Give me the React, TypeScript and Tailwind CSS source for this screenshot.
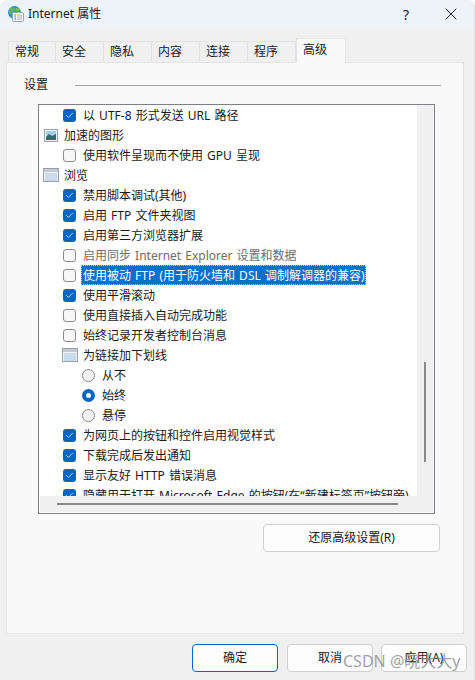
import { Check, X } from 'lucide-react'

const font = { fontFamily: '"Noto Sans", "Noto Sans CJK SC", sans-serif' }

type Row =
  | { kind: 'check'; label: string; checked?: boolean; muted?: boolean; selected?: boolean }
  | { kind: 'radio'; label: string; checked?: boolean }
  | { kind: 'group'; label: string; icon: 'image' | 'window'; nested?: boolean }

const rows: Row[] = [
  { kind: 'check', label: '以 UTF-8 形式发送 URL 路径', checked: true },
  { kind: 'group', label: '加速的图形', icon: 'image' },
  { kind: 'check', label: '使用软件呈现而不使用 GPU 呈现' },
  { kind: 'group', label: '浏览', icon: 'window' },
  { kind: 'check', label: '禁用脚本调试(其他)', checked: true },
  { kind: 'check', label: '启用 FTP 文件夹视图', checked: true },
  { kind: 'check', label: '启用第三方浏览器扩展', checked: true },
  { kind: 'check', label: '启用同步 Internet Explorer 设置和数据', muted: true },
  { kind: 'check', label: '使用被动 FTP (用于防火墙和 DSL 调制解调器的兼容)', selected: true },
  { kind: 'check', label: '使用平滑滚动', checked: true },
  { kind: 'check', label: '使用直接插入自动完成功能' },
  { kind: 'check', label: '始终记录开发者控制台消息' },
  { kind: 'group', label: '为链接加下划线', icon: 'window', nested: true },
  { kind: 'radio', label: '从不' },
  { kind: 'radio', label: '始终', checked: true },
  { kind: 'radio', label: '悬停' },
  { kind: 'check', label: '为网页上的按钮和控件启用视觉样式', checked: true },
  { kind: 'check', label: '下载完成后发出通知', checked: true },
  { kind: 'check', label: '显示友好 HTTP 错误消息', checked: true },
  { kind: 'check', label: '隐藏用于打开 Microsoft Edge 的按钮(在“新建标签页”按钮旁)', checked: true },
]

const tabs = ['常规', '安全', '隐私', '内容', '连接', '程序']

function GlobeIcon() {
  return (
    <svg width="18" height="18" viewBox="0 0 18 18" className="shrink-0">
      <circle cx="7.5" cy="7.5" r="6.5" fill="#2f8fd8" />
      <path d="M3 3.5c2-1.500 4-1 5 0s-.5 2.500-2 3-1 3-2.500 3S1.500 5 3 3.500z" fill="#5cb85c" />
      <path d="M9 3c2-.5 3.500.5 3.500 2S10 6.500 9 6 8 3.500 9 3z" fill="#6fbf5f" />
      <rect x="5.500" y="7.500" width="11" height="9" rx="1" fill="#f4f6f8" stroke="#9aa7b4" />
      <path d="M7.500 10H9M7.500 12H9M7.500 14H9" stroke="#3a78c2" strokeWidth="1" />
      <path d="M10 10h5M10 12h5M10 14h5" stroke="#a8b4c0" strokeWidth="1" />
    </svg>
  )
}

function GroupIcon({ icon }: { icon: 'image' | 'window' }) {
  if (icon === 'image') {
    return (
      <svg width="14" height="13" viewBox="0 0 14 13" className="shrink-0">
        <rect x="0.500" y="0.500" width="13" height="12" fill="#f2f4f6" stroke="#9aa0a8" />
        <rect x="2" y="2" width="10" height="9" fill="#9fd0ea" />
        <path d="M2 8l3-3 3 2 4-2v6H2z" fill="#2c6e6a" />
      </svg>
    )
  }
  return (
    <svg width="16" height="14" viewBox="0 0 16 14" className="shrink-0">
      <rect x="0.500" y="0.500" width="15" height="13" fill="#eef1f5" stroke="#9aa0a8" />
      <rect x="1" y="1" width="14" height="3" fill="#c3cad2" />
      <path d="M2 6h12M2 8h12M2 10h12M2 12h12" stroke="#a9c4e4" strokeWidth="1" />
    </svg>
  )
}

function CheckBox({ checked }: { checked?: boolean }) {
  if (checked) {
    return (
      <span className="flex h-[13px] w-[13px] shrink-0 items-center justify-center rounded-[3px] bg-[#0067c0]">
        <Check className="h-[9px] w-[9px] text-white" strokeWidth={2} />
      </span>
    )
  }
  return <span className="h-[13px] w-[13px] shrink-0 rounded-[3px] border border-[#8c8c8c] bg-[#f7f7f7]" />
}

function Radio({ checked }: { checked?: boolean }) {
  if (checked) {
    return (
      <span className="flex h-[13px] w-[13px] shrink-0 items-center justify-center rounded-full bg-[#0067c0]">
        <span className="h-[5px] w-[5px] rounded-full bg-white" />
      </span>
    )
  }
  return <span className="h-[13px] w-[13px] shrink-0 rounded-full border border-[#8c8c8c] bg-[#f3f3f3]" />
}

function SettingRow({ row }: { row: Row }) {
  if (row.kind === 'group') {
    if (row.nested) {
      return (
        <div className="flex h-5 shrink-0 items-center gap-[5px] pl-[23px]">
          <GroupIcon icon={row.icon} />
          <span className="pt-[2px]">{row.label}</span>
        </div>
      )
    }
    return (
      <div className="flex h-5 shrink-0 items-center gap-[5px] pl-[4px]">
        <span className="flex w-[16px] shrink-0 justify-center">
          <GroupIcon icon={row.icon} />
        </span>
        <span className="pt-[2px]">{row.label}</span>
      </div>
    )
  }
  if (row.kind === 'radio') {
    return (
      <div className="flex h-5 shrink-0 items-center gap-[7px] pl-[43px]">
        <Radio checked={row.checked} />
        <span className="pt-[2px]">{row.label}</span>
      </div>
    )
  }
  return (
    <div className="flex h-5 shrink-0 items-center gap-[5px] pl-[24px]">
      <CheckBox checked={row.checked} />
      <span
        className={
          row.selected
            ? 'h-5 border border-dotted border-[#f5c07a] bg-[#0a6fc9] px-px pt-[2px] leading-4 text-white [word-spacing:1px]'
            : row.muted
              ? 'pl-[2px] pt-[2px] text-[#6d6d6d] [word-spacing:1px]'
              : 'pl-[2px] pt-[2px] [word-spacing:1px]'
        }
      >
        {row.label}
      </span>
    </div>
  )
}

function DialogButton({ label, primary, className }: { label: string; primary?: boolean; className?: string }) {
  return (
    <button
      className={`flex h-7 items-center justify-center rounded-[4px] border bg-[#fdfdfd] text-[12px] text-[#1a1a1a] ${
        primary ? 'border-[#0067c0]' : 'border-[#d0d0d0]'
      } ${className ?? ''}`}
    >
      {label}
    </button>
  )
}

export default function App() {
  return (
    <div className="relative flex h-[680px] w-[475px] flex-col overflow-hidden bg-white text-[#1a1a1a]" style={font}>
      <div className="flex h-full flex-col overflow-hidden rounded-t-lg border-r border-[#e2e2e2] bg-[#f0f0f0]">
        {/* Title bar */}
        <div className="flex h-[28px] shrink-0 items-center bg-[#eef2f9] pl-[7px] pr-[13px] text-[12px]">
          <GlobeIcon />
          <span className="ml-[3px]">Internet 属性</span>
          <span className="ml-auto mr-[32px] text-[14px]">?</span>
          <X className="h-[20px] w-[20px] text-[#222]" strokeWidth={1.200} />
        </div>

        {/* Tabs */}
        <div className="flex h-[34px] shrink-0 items-end pl-[8px] text-[12px]">
          {tabs.map((tab) => (
            <div
              key={tab}
              className="flex h-[21px] w-[48px] items-center border-r border-t border-[#e3e3e3] pl-[6px] first:border-l"
            >
              {tab}
            </div>
          ))}
          <div className="relative z-10 -mb-px h-[25px] w-[50px] border-x border-t border-[#e3e3e3] bg-[#f9f9f9] pl-[6px] pt-[3px] leading-4">
            高级
          </div>
        </div>

        {/* Tab panel */}
        <div className="ml-[6px] mr-[10px] flex h-[572px] shrink-0 flex-col border border-[#e3e3e3] bg-[#f9f9f9] pl-[17px] pr-[22px] text-[12px]">
          <div className="flex h-[41px] shrink-0 items-center pt-[3px]">
            <span className="w-[51px]">设置</span>
            <span className="h-px flex-1 bg-[#a0a0a0]" />
          </div>

          <div className="ml-[14px] flex h-[410px] w-[397px] shrink-0 flex-col border border-[#7f7f87] bg-white">
            <div className="flex min-h-0 flex-1">
              <div className="flex min-w-0 flex-1 flex-col overflow-hidden whitespace-nowrap">
                {rows.map((row) => (
                  <SettingRow key={row.label} row={row} />
                ))}
              </div>
              <div className="mr-px w-[16px] shrink-0 bg-[#f0f0f0] pt-[257px]">
                <div className="ml-[7px] h-[100px] w-[2px] bg-[#8a8a8a]" />
              </div>
            </div>
            <div className="mx-px mb-px flex h-[16px] shrink-0 items-center bg-[#f0f0f0] pl-[17px]">
              <div className="h-[2px] w-[341px] bg-[#8a8a8a]" />
            </div>
          </div>

          <div className="mt-[10px] flex justify-end pr-[1px]">
            <DialogButton label="还原高级设置(R)" className="w-[177px]" />
          </div>
        </div>

        {/* Footer buttons */}
        <div className="mt-[10px] flex justify-end gap-[8px] pr-[7px]">
          <DialogButton label="确定" primary className="mr-px w-[86px]" />
          <DialogButton label="取消" className="w-[86px]" />
          <DialogButton label="应用(A)" className="w-[86px]" />
        </div>
      </div>

      {/* CSDN watermark */}
      <span className="absolute left-[343px] top-[649px] text-[16px] text-[#8a8a8a]/80">CSDN @晓大大y</span>
    </div>
  )
}
